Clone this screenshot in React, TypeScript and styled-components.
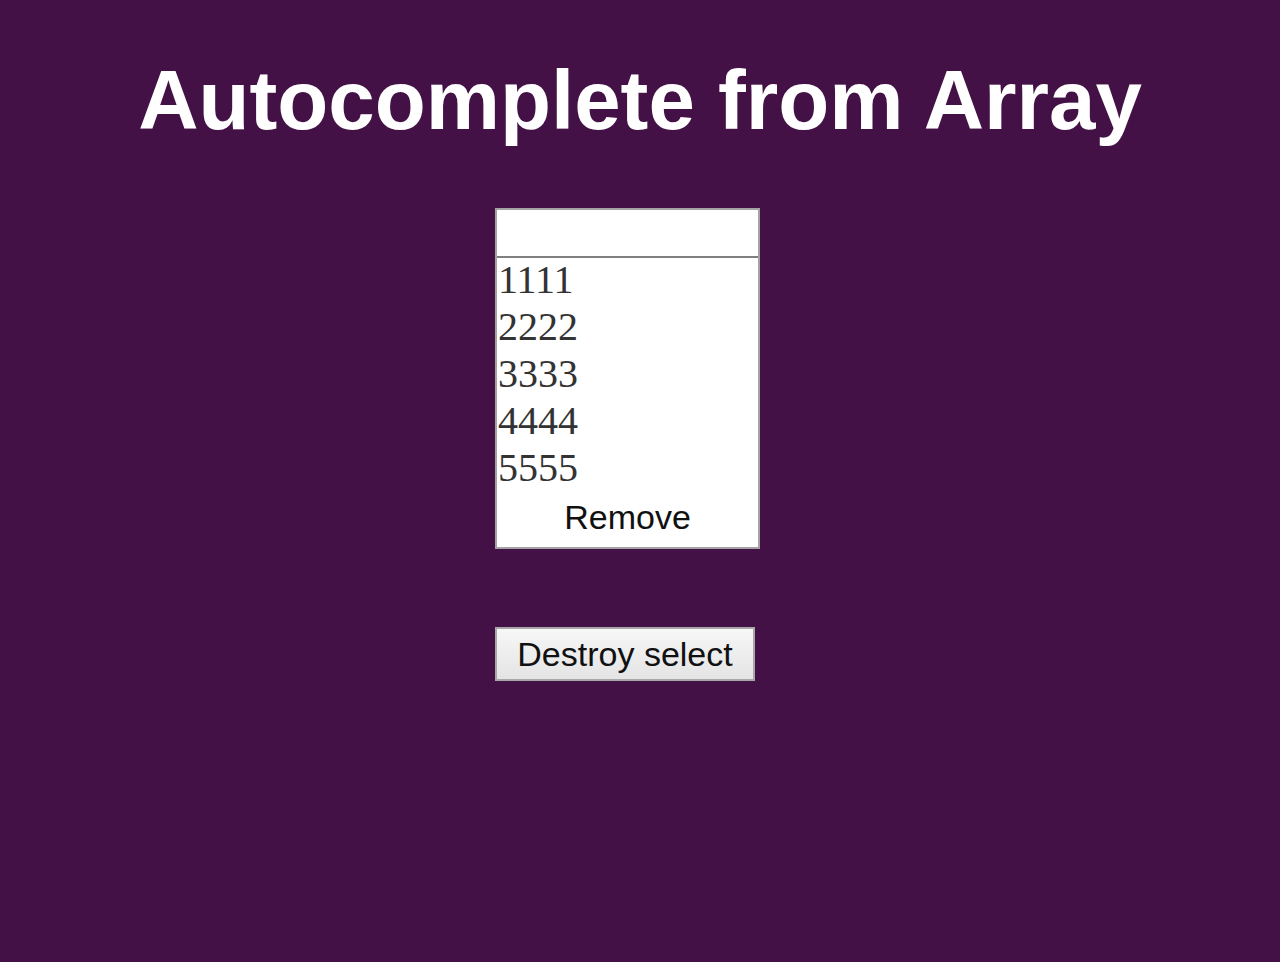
import { useState } from 'react'
import styled, { createGlobalStyle } from 'styled-components'

const GlobalStyle = createGlobalStyle`
  html, body {
    margin: 0;
    padding: 0;
    background-color: #431145;
  }
`

const Page = styled.div`
  min-height: 962px;
  background-color: #431145;
  display: flex;
  flex-direction: column;
  align-items: center;
`

const Title = styled.h1`
  margin: 52px 0 0;
  font-family: 'Liberation Sans', Arial, sans-serif;
  font-size: 83.5px;
  font-weight: bold;
  line-height: 96px;
  color: #ffffff;
`

const Column = styled.div`
  width: 290px;
  margin-top: 60px;
  display: flex;
  flex-direction: column;
  align-items: flex-start;
`

const SelectBox = styled.div`
  width: 261px;
  background: #ffffff;
  border: 2px solid #a3a3a3;
  display: flex;
  flex-direction: column;
`

const SearchInput = styled.input`
  height: 46px;
  border: none;
  border-bottom: 2px solid #7f7f7f;
  padding: 0;
  outline: none;
  font-size: 30px;
`

const OptionList = styled.div`
  margin-top: -2px;
  display: flex;
  flex-direction: column;
`

const Option = styled.div`
  font-family: 'Liberation Serif', 'Times New Roman', serif;
  font-size: 40px;
  line-height: 47px;
  color: #333333;
  padding-left: 1px;
`

const RemoveButton = styled.div`
  font-family: 'Liberation Sans', Arial, sans-serif;
  font-size: 34px;
  line-height: 52px;
  padding-bottom: 4px;
  text-align: center;
  color: #111111;
  cursor: pointer;
`

const DestroyButton = styled.button`
  margin-top: 78px;
  width: 260px;
  height: 54px;
  border: 2px solid #a8a8a8;
  background: linear-gradient(#f7f7f7, #e4e4e4);
  font-family: 'Liberation Sans', Arial, sans-serif;
  font-size: 34px;
  color: #111111;
  padding: 0;
`

const App = () => {
  const [items] = useState(['1111', '2222', '3333', '4444', '5555'])
  const [query, setQuery] = useState('')

  return (
    <Page>
      <GlobalStyle />
      <Title>Autocomplete from Array</Title>
      <Column>
        <SelectBox>
          <SearchInput value={query} onChange={(e) => setQuery(e.target.value)} />
          <OptionList>
            {items
              .filter((item) => item.includes(query))
              .map((item) => (
                <Option key={item}>{item}</Option>
              ))}
          </OptionList>
          <RemoveButton>Remove</RemoveButton>
        </SelectBox>
        <DestroyButton>Destroy select</DestroyButton>
      </Column>
    </Page>
  )
}

export default App
